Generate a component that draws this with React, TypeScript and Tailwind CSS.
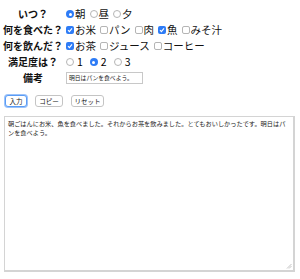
import React from "react";

const font = { fontFamily: '"Noto Sans CJK JP", "Noto Sans", sans-serif' };

function Radio({ checked }: { checked?: boolean }) {
  return checked ? (
    <span className="inline-flex w-[8px] h-[8px] rounded-full bg-[#2e7cf6] items-center justify-center shrink-0">
      <span className="w-[3px] h-[3px] rounded-full bg-white" />
    </span>
  ) : (
    <span className="inline-block w-[8px] h-[8px] rounded-full border border-[#b5b5b5] bg-white shrink-0" />
  );
}

function Check({ checked }: { checked?: boolean }) {
  return checked ? (
    <span className="inline-flex w-[8px] h-[8px] rounded-[2px] bg-[#2e7cf6] items-center justify-center shrink-0">
      <svg width="6" height="6" viewBox="0 0 6 6">
        <path d="M1 3.2 L2.4 4.6 L5 1.4" stroke="white" strokeWidth="1.1" fill="none" />
      </svg>
    </span>
  ) : (
    <span className="inline-block w-[8px] h-[8px] rounded-[2px] border border-[#b5b5b5] bg-white shrink-0" />
  );
}

function Opt({ kind, checked, label }: { kind: "r" | "c"; checked?: boolean; label: string }) {
  return (
    <span className="inline-flex items-center gap-[1px] mr-[4px]">
      {kind === "r" ? <Radio checked={checked} /> : <Check checked={checked} />}
      <span className="text-[10.5px] text-[#111] leading-none">{label}</span>
    </span>
  );
}

function Row({ label, children }: { label: string; children: React.ReactNode }) {
  return (
    <div className="flex items-center h-[16px]">
      <div className="w-[60px] text-center text-[10px] font-bold text-[#111] leading-none">{label}</div>
      <div className="flex items-center pl-[3px]">{children}</div>
    </div>
  );
}

export default function App() {
  return (
    <div className="w-[300px] h-[279px] bg-white" style={font}>
      <div className="pt-[6px] pl-[3px]">
        <Row label="いつ？">
          <Opt kind="r" checked label="朝" />
          <Opt kind="r" label="昼" />
          <Opt kind="r" label="夕" />
        </Row>
        <Row label="何を食べた？">
          <Opt kind="c" checked label="お米" />
          <Opt kind="c" label="パン" />
          <Opt kind="c" label="肉" />
          <Opt kind="c" checked label="魚" />
          <Opt kind="c" label="みそ汁" />
        </Row>
        <Row label="何を飲んだ？">
          <Opt kind="c" checked label="お茶" />
          <Opt kind="c" label="ジュース" />
          <Opt kind="c" label="コーヒー" />
        </Row>
        <Row label="満足度は？">
          <span className="inline-flex items-center mr-[7px]">
            <Radio />
            <span className="text-[10.5px] ml-[3px] leading-none">1</span>
          </span>
          <span className="inline-flex items-center mr-[7px]">
            <Radio checked />
            <span className="text-[10.5px] ml-[3px] leading-none">2</span>
          </span>
          <span className="inline-flex items-center">
            <Radio />
            <span className="text-[10.5px] ml-[3px] leading-none">3</span>
          </span>
        </Row>
        <Row label="備考">
          <div className="w-[77px] h-[12px] border border-[#c8c8c8] flex items-center px-[2px] text-[5.8px] text-[#222] leading-none whitespace-nowrap">
            明日はパンを食べよう。
          </div>
        </Row>
      </div>
      <div className="flex items-center gap-[8px] pl-[5px] mt-[9px]">
        <button className="h-[12px] w-[22px] rounded-[3px] border border-[#5a9cf5] ring-1 ring-[#9cc3fa] bg-white text-[6.5px] leading-none text-[#111]">
          入力
        </button>
        <button className="h-[12px] w-[28px] rounded-[3px] border border-[#c4c4c4] bg-white text-[6.5px] leading-none text-[#111]">
          コピー
        </button>
        <button className="h-[12px] w-[33px] rounded-[3px] border border-[#c4c4c4] bg-white text-[6.5px] leading-none text-[#111]">
          リセット
        </button>
      </div>
      <div className="mt-[9px] ml-[4px] w-[291px] h-[156px] border border-[#d4d4d4] border-b-[2px] border-r-[2px] relative px-[3px] pt-[2px]">
        <p className="text-[6.2px] leading-[9px] text-[#222] break-all">
          朝ごはんにお米、魚を食べました。それからお茶を飲みました。とてもおいしかったです。明日はパンを食べよう。
        </p>
        <svg className="absolute right-[1px] bottom-[1px]" width="6" height="6" viewBox="0 0 6 6">
          <path d="M1 5.5 L5.5 1 M3 5.5 L5.5 3" stroke="#aaa" strokeWidth="0.7" />
        </svg>
      </div>
    </div>
  );
}
